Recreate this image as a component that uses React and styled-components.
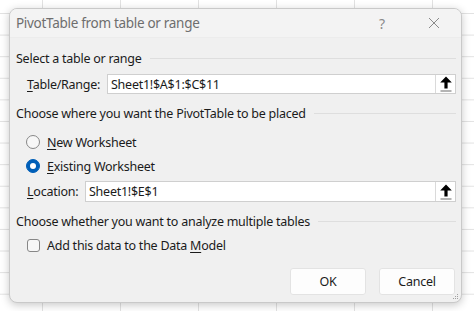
import React from "react";
import styled, { createGlobalStyle } from "styled-components";

const Global = createGlobalStyle`
  html, body { margin: 0; padding: 0; }
  body {
    width: 474px;
    height: 311px;
    overflow: hidden;
    background-color: #ffffff;
    background-image:
      linear-gradient(to right, #e2e2e2 1px, transparent 1px),
      linear-gradient(to bottom, #e2e2e2 1px, transparent 1px);
    background-size: 78px 21.6px;
    background-position: 42px 13px;
    font-family: "Noto Sans", "Open Sans", sans-serif;
  }
  #root { padding: 8px 0 0 9px; }
`;

const Dialog = styled.div`
  position: relative;
  box-sizing: border-box;
  width: 453px;
  height: 295px;
  background: #f0f0f0;
  border: 1px solid #c9c9c9;
  border-radius: 8px;
  box-shadow: 0 2px 8px rgba(0, 0, 0, 0.22);
  display: flex;
  flex-direction: column;
  overflow: hidden;
`;

const TitleBar = styled.div`
  height: 28px;
  display: flex;
  align-items: center;
  padding-left: 6px;
  background: #f3f3f3;
  border-bottom: 1px solid #ececec;
`;

const Title = styled.div`
  flex: 1;
  font-size: 13.5px;
  color: #6e6e6e;
  letter-spacing: -0.3px;
`;

const TitleButton = styled.div`
  width: ${(p) => p.$w}px;
  display: flex;
  justify-content: center;
  align-items: center;
  color: #8a8a8a;
  font-size: 14px;
`;

const Body = styled.div`
  display: flex;
  flex-direction: column;
  padding: 10px 5px 0 6px;
  color: #1b1b1b;
  font-size: 12.5px;
  letter-spacing: -0.25px;
`;

const Heading = styled.div`
  height: 20px;
  display: flex;
  align-items: center;
  margin-top: ${(p) => p.$mt || 0}px;
  &::after {
    content: "";
    flex: 1;
    height: 1px;
    background: #dedede;
    margin-left: 8px;
  }
`;

const FieldRow = styled.div`
  display: flex;
  align-items: center;
  height: ${(p) => p.$h}px;
  margin-top: ${(p) => p.$mt}px;
  padding-left: 11px;
`;

const Label = styled.label`
  width: ${(p) => p.$w}px;
  flex: none;
  white-space: nowrap;
`;

const U = styled.span`
  text-decoration: underline;
  text-underline-offset: 2px;
  text-decoration-thickness: 1px;
`;

const InputBox = styled.div`
  flex: 1;
  height: 100%;
  box-sizing: border-box;
  display: flex;
  align-items: center;
  background: #ffffff;
  border: 1px solid #cfcfcf;
`;

const InputText = styled.div`
  flex: 1;
  padding-left: 3px;
`;

const PickButton = styled.div`
  width: 20px;
  height: 100%;
  box-sizing: border-box;
  border-left: 1px solid #dadada;
  display: flex;
  align-items: center;
  justify-content: center;
`;

const OptionRow = styled.div`
  display: flex;
  align-items: center;
  height: 20px;
  margin-top: ${(p) => p.$mt}px;
  padding-left: 11px;
`;

const Radio = styled.span`
  box-sizing: border-box;
  width: 14px;
  height: 14px;
  border-radius: 50%;
  margin-left: -1px;
  margin-right: 7px;
  flex: none;
  ${(p) =>
    p.$checked
      ? `background: #005fb8; border: 1px solid #005fb8; display:flex; align-items:center; justify-content:center;
         &::after { content: ""; width: 6px; height: 6px; border-radius: 50%; background: #fff; }`
      : `background: #f7f7f7; border: 1px solid #878787;`}
`;

const Check = styled.span`
  box-sizing: border-box;
  width: 13px;
  height: 13px;
  border: 1px solid #878787;
  border-radius: 3px;
  background: #f7f7f7;
  margin-right: 7px;
  flex: none;
`;

const ButtonRow = styled.div`
  display: flex;
  justify-content: flex-end;
  gap: 13px;
  margin-top: 13px;
  padding-right: 1px;
`;

const Button = styled.div`
  box-sizing: border-box;
  width: 76px;
  height: 27px;
  display: flex;
  align-items: center;
  justify-content: center;
  background: #fdfdfd;
  border: 1px solid #e3e3e3;
  border-radius: 3px;
  color: #1b1b1b;
`;

const Grip = styled.svg`
  position: absolute;
  right: 2px;
  bottom: 2px;
`;

const UpArrow = () => (
  <svg width="14" height="18" viewBox="0 0 14 18">
    <path d="M7 1.5 L12.8 7.5 L8.6 7.5 L8.6 13.5 L5.4 13.5 L5.4 7.5 L1.2 7.5 Z" fill="#000" />
    <rect x="1.5" y="15.5" width="11" height="1" fill="#6a6a6a" />
  </svg>
);

const CloseIcon = () => (
  <svg width="12" height="12" viewBox="0 0 12 12">
    <path d="M1 1 L11 11 M11 1 L1 11" stroke="#8a8a8a" strokeWidth="1" fill="none" />
  </svg>
);

export default function App() {
  return (
    <>
      <Global />
      <Dialog>
        <TitleBar>
          <Title>PivotTable from table or range</Title>
          <TitleButton $w={50}>?</TitleButton>
          <TitleButton $w={54}>
            <CloseIcon />
          </TitleButton>
        </TitleBar>
        <Body>
          <Heading>Select a table or range</Heading>
          <FieldRow $h={20} $mt={6}>
            <Label $w={80}>
              <U>T</U>able/Range:
            </Label>
            <InputBox>
              <InputText>Sheet1!$A$1:$C$11</InputText>
              <PickButton>
                <UpArrow />
              </PickButton>
            </InputBox>
          </FieldRow>
          <Heading $mt={9}>Choose where you want the PivotTable to be placed</Heading>
          <OptionRow $mt={9}>
            <Radio />
            <span>
              <U>N</U>ew Worksheet
            </span>
          </OptionRow>
          <OptionRow $mt={4}>
            <Radio $checked />
            <span>
              <U>E</U>xisting Worksheet
            </span>
          </OptionRow>
          <FieldRow $h={21} $mt={5}>
            <Label $w={58}>
              <U>L</U>ocation:
            </Label>
            <InputBox>
              <InputText>Sheet1!$E$1</InputText>
              <PickButton>
                <UpArrow />
              </PickButton>
            </InputBox>
          </FieldRow>
          <Heading $mt={9}>Choose whether you want to analyze multiple tables</Heading>
          <OptionRow $mt={4}>
            <Check />
            <span>
              Add this data to the Data <U>M</U>odel
            </span>
          </OptionRow>
          <ButtonRow>
            <Button>OK</Button>
            <Button>Cancel</Button>
          </ButtonRow>
        </Body>
        <Grip width="8" height="8" viewBox="0 0 8 8">
          {[
            [6, 2],
            [6, 4],
            [4, 4],
            [6, 6],
            [4, 6],
            [2, 6],
          ].map(([x, y], i) => (
            <rect key={i} x={x} y={y} width="1" height="1" fill="#a0a0a0" />
          ))}
        </Grip>
      </Dialog>
    </>
  );
}
